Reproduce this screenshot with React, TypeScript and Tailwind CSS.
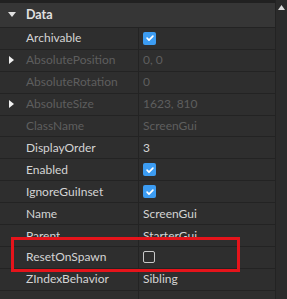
type Row = {
  name: string
  value?: string
  check?: boolean
  disabled?: boolean
  arrow?: boolean
  clip?: boolean
}

const rows: Row[] = [
  { name: "Archivable", check: true },
  { name: "AbsolutePosition", value: "0, 0", disabled: true, arrow: true },
  { name: "AbsoluteRotation", value: "0", disabled: true },
  { name: "AbsoluteSize", value: "1623, 810", disabled: true, arrow: true },
  { name: "ClassName", value: "ScreenGui", disabled: true },
  { name: "DisplayOrder", value: "3" },
  { name: "Enabled", check: true },
  { name: "IgnoreGuiInset", check: true },
  { name: "Name", value: "ScreenGui" },
  { name: "Parent", value: "StarterGui", clip: true },
  { name: "ResetOnSpawn", check: false },
  { name: "ZIndexBehavior", value: "Sibling" },
  { name: "" },
]

function CheckBox({ on }: { on: boolean }) {
  if (!on) {
    return <div className="w-[12px] h-[12px] rounded-[2px] border border-[#c8c8c8]" />
  }
  return (
    <div className="w-[13px] h-[13px] rounded-[2px] bg-[#3c9cf2] flex items-center justify-center">
      <svg viewBox="0 0 12 12" className="w-[10px] h-[10px]" fill="none" stroke="white" strokeWidth={2} strokeLinecap="round" strokeLinejoin="round">
        <path d="M2.5 6.2l2.3 2.3 4.7-4.8" />
      </svg>
    </div>
  )
}

export default function App() {
  return (
    <div className="relative w-[287px] h-[299px] overflow-hidden bg-[#2e2e2e] flex text-[12px]" style={{ fontFamily: "Lato, 'Noto Sans', sans-serif" }}>
      <div className="flex-1 flex flex-col border-r border-[#232323]">
        <div className="h-[3px] shrink-0 bg-[#212121]" />
        {/* Section header */}
        <div className="h-[25px] shrink-0 bg-[#363636] border-b border-[#232323] flex items-center">
          <svg viewBox="0 0 8 6" className="w-[8px] h-[6px] ml-[8px]">
            <path d="M0 0h8L4 5z" fill="#e0e0e0" />
          </svg>
          <span className="ml-[10px] font-bold text-[#e2e2e2] text-[12.5px]">Data</span>
        </div>
        {rows.map((r, i) => (
          <div key={i} className="h-[21.9px] shrink-0 flex border-b border-[#232323]">
            <div className="w-[139px] shrink-0 flex items-center border-r border-[#232323]">
              <div className="w-[26px] shrink-0 flex items-center pl-[9px]">
                {r.arrow && (
                  <svg viewBox="0 0 5 8" className="w-[5px] h-[8px]">
                    <path d="M0 0l5 4-5 4z" fill="#f0f0f0" />
                  </svg>
                )}
              </div>
              {r.clip ? (
                <div className="self-start h-[12px] overflow-hidden pt-[3px] leading-[15px] text-[#d4d4d4]">{r.name}</div>
              ) : (
                <span className={r.disabled ? "text-[#5e5e5e]" : "text-[#d4d4d4]"}>{r.name}</span>
              )}
            </div>
            <div className="flex-1 flex items-center pl-[4px]">
              {r.check !== undefined ? (
                <CheckBox on={r.check} />
              ) : r.clip ? (
                <div className="self-start h-[12px] overflow-hidden pt-[3px] leading-[15px] text-[#d4d4d4]">{r.value}</div>
              ) : (
                <span className={r.disabled ? "text-[#5e5e5e]" : "text-[#d4d4d4]"}>{r.value}</span>
              )}
            </div>
          </div>
        ))}
      </div>
      {/* Scrollbar */}
      <div className="w-[11px] shrink-0 bg-[#2b2b2b] flex flex-col items-center pt-[5px]">
        <svg viewBox="0 0 7 5" className="w-[7px] h-[5px]">
          <path d="M0 5L3.5 0 7 5z" fill="#d8d8d8" />
        </svg>
      </div>
      {/* Red annotation box */}
      <div className="absolute left-[11px] top-[237px] w-[229px] h-[35px] border-[3px] border-[#e5141b]" />
    </div>
  )
}
